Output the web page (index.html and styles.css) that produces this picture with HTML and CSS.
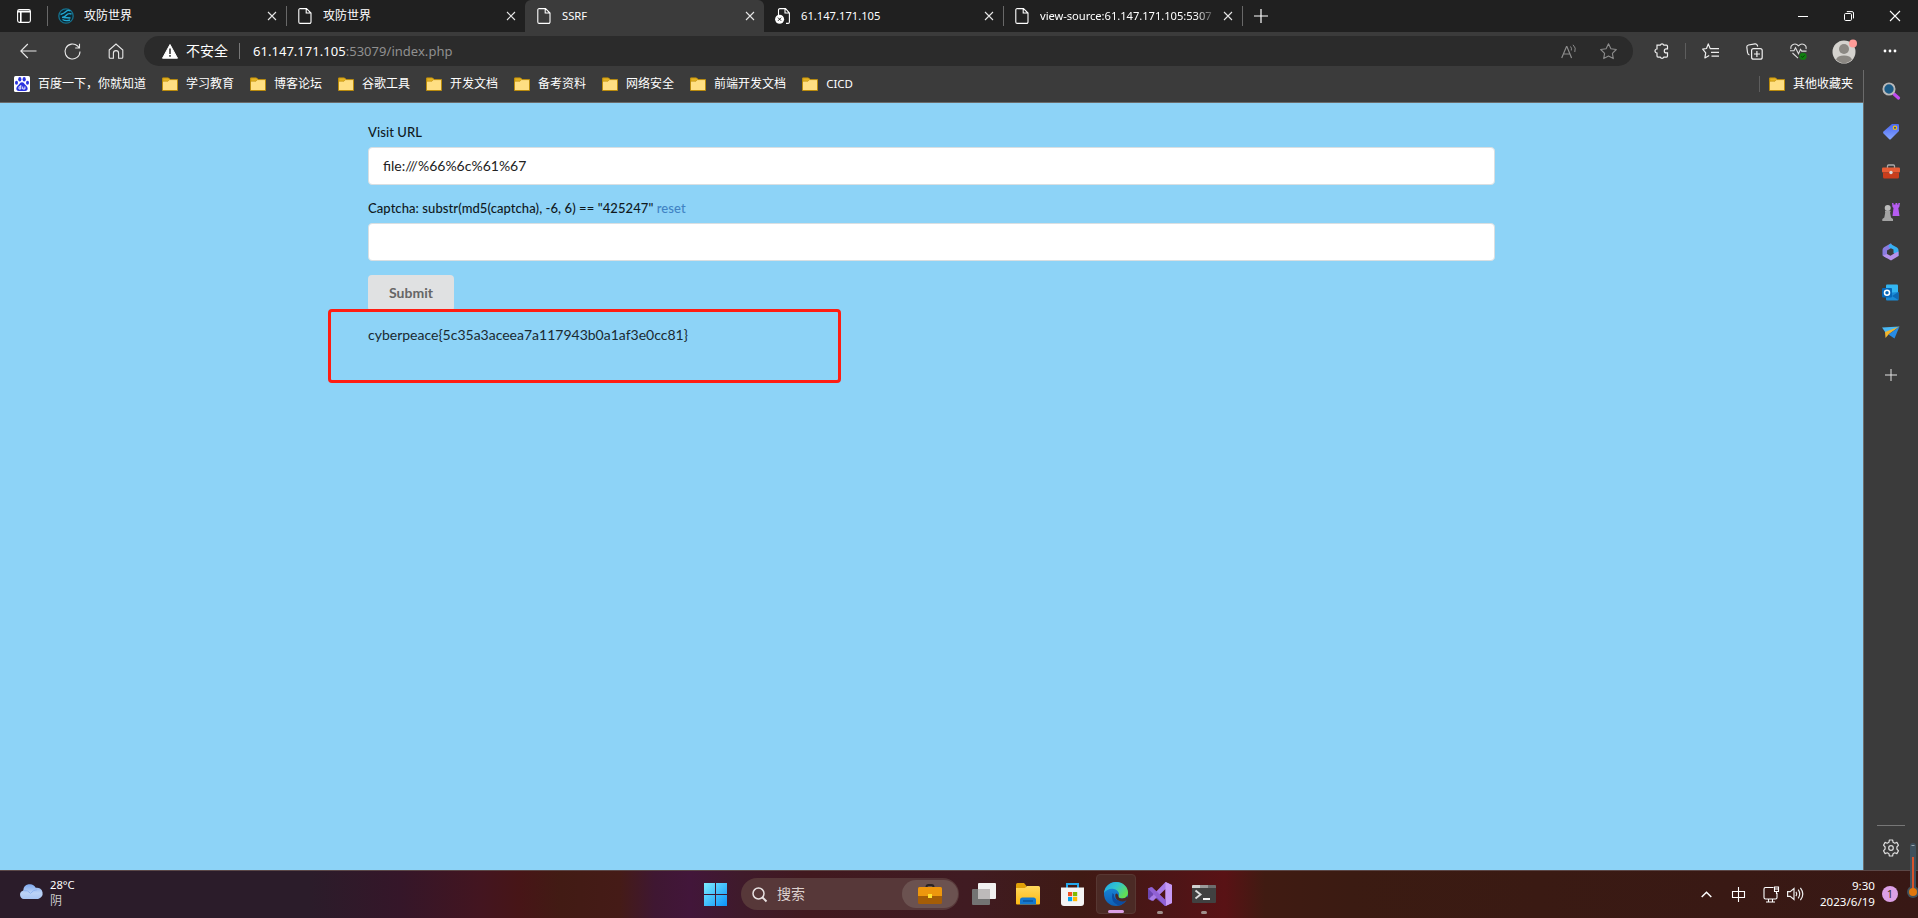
FILE: index.html
```html
<!DOCTYPE html>
<html lang="zh-CN">
<head>
<meta charset="utf-8">
<title>SSRF</title>
<link rel="stylesheet" href="styles.css">
</head>
<body>
<svg width="0" height="0" class="defs">
  <defs>
    <symbol id="page" viewBox="0 0 14 16"><path d="M2.5.6h6L13 5v9a1.4 1.4 0 0 1-1.4 1.4H2.2A1.4 1.4 0 0 1 .8 14V2A1.4 1.4 0 0 1 2.5.6zM8.2.8V5H13" fill="none" stroke="#fff" stroke-width="1.1"/></symbol>
    <symbol id="x" viewBox="0 0 10 10"><path d="M1 1l8 8M9 1L1 9" stroke="#e6e6e6" stroke-width="1.1" fill="none"/></symbol>
    <symbol id="folder" viewBox="0 0 16 14"><path d="M.5 1h6l1.6 1.6h7.4v10.9H.5z" fill="#ffdf83" stroke="#b98a0c"/><path d="M.8 1h5.6l1.3 1.5L6 4.2H.8z" fill="#e5b322" stroke="#b98a0c" stroke-width=".6"/></symbol>
    <linearGradient id="win" x1="0" y1="0" x2="1" y2="1"><stop offset="0" stop-color="#7cecff"/><stop offset="1" stop-color="#0a92fa"/></linearGradient>
    <linearGradient id="cloud" x1="0" y1="0" x2="0" y2="1"><stop offset="0" stop-color="#7fa9ee"/><stop offset=".6" stop-color="#bcd3f6"/><stop offset="1" stop-color="#a9c5f3"/></linearGradient>
    <linearGradient id="edgeTop" x1="0" y1="0" x2="1" y2=".6"><stop offset="0" stop-color="#1fa5e6"/><stop offset=".5" stop-color="#31c5cf"/><stop offset="1" stop-color="#64e04f"/></linearGradient>
    <linearGradient id="edgeLow" x1="0" y1="0" x2="0" y2="1"><stop offset="0" stop-color="#1b8fe0"/><stop offset="1" stop-color="#0d5fb4"/></linearGradient>
    <linearGradient id="gold" x1="0" y1="0" x2="0" y2="1"><stop offset="0" stop-color="#ffd95e"/><stop offset="1" stop-color="#fdb913"/></linearGradient>
    <linearGradient id="tag" x1="0" y1="0" x2="0" y2="1"><stop offset="0" stop-color="#4a67f0"/><stop offset="1" stop-color="#86a6ff"/></linearGradient>
  </defs>
</svg>
<div class="window">
  <header class="tabs">
    <div class="tab-menu"><svg width="14" height="14" viewBox="0 0 14 14"><rect x=".6" y=".6" width="12.8" height="12.8" rx="1.8" fill="none" stroke="#fff" stroke-width="1.1"/><path d="M.6 2.6h12.8M3.8 3v10" stroke="#fff" stroke-width="1.6"/></svg></div>
    <div class="tab site sep">
      <svg width="16" height="16" viewBox="0 0 16 16"><circle cx="8" cy="8" r="7.200" fill="#0c2630" stroke="#16708c" stroke-width="1.300"/><path d="M2.500 6.500Q6 5.500 8 3.500t4.500-.5M4 9.500q3-.5 4.500-2.500t5-1M5.500 9.500l7 .5M4.500 11.500q3.500 2 7.500.5" fill="none" stroke="#22a9d3" stroke-width="1.400"/></svg>
      <span class="title">攻防世界</span><svg class="close" width="10" height="10"><use href="#x"/></svg>
    </div>
    <div class="tab sep"><svg width="14" height="16"><use href="#page"/></svg><span class="title">攻防世界</span><svg class="close" width="10" height="10"><use href="#x"/></svg></div>
    <div class="tab active"><svg width="14" height="16"><use href="#page"/></svg><span class="title latin">SSRF</span><svg class="close" width="10" height="10"><use href="#x"/></svg></div>
    <div class="tab crashed"><svg width="16" height="16" viewBox="0 0 16 16"><path d="M3.500 7V2A1.400 1.400 0 0 1 5 .6h5.500L14.400 5v9a1.400 1.400 0 0 1-1.400 1.400h-2M10 .8V5h4.200" fill="none" stroke="#fff" stroke-width="1.100"/><circle cx="4.600" cy="11.200" r="4.500" fill="#fff"/><path d="M3 9.600l3.200 3.200m0-3.200L3 12.800" stroke="#222" stroke-width="1"/></svg><span class="title latin">61.147.171.105</span><svg class="close" width="10" height="10"><use href="#x"/></svg></div>
    <div class="tab sep"><svg width="14" height="16"><use href="#page"/></svg><span class="title latin fade">view-source:61.147.171.105:5307</span><svg class="close" width="10" height="10"><use href="#x"/></svg></div>
    <div class="new-tab sep"><svg width="14" height="14" viewBox="0 0 14 14"><path d="M7 0v14M0 7h14" stroke="#fff" stroke-width="1.200"/></svg></div>
    <div class="window-buttons">
      <span><svg width="10" height="10"><path d="M0 5.500h10" stroke="#fff"/></svg></span>
      <span><svg width="10" height="10" viewBox="0 0 10 10"><rect x=".5" y="2.500" width="7" height="7" rx="1.200" fill="none" stroke="#fff"/><path d="M2.800.6H8A1.500 1.500 0 0 1 9.500 2v5.400" fill="none" stroke="#fff"/></svg></span>
      <span><svg width="10" height="10"><path d="M0 0l10 10M10 0L0 10" stroke="#fff" stroke-width="1.100"/></svg></span>
    </div>
  </header>

  <nav class="toolbar">
    <span class="cell"><svg width="17" height="16" viewBox="0 0 17 16"><path d="M16.500 8H.8M7.800 1L.8 8l7 7" fill="none" stroke="#e8e8e8" stroke-width="1.100"/></svg></span>
    <span class="cell"><svg width="17" height="17" viewBox="0 0 17 17"><path d="M16 8.500A7.500 7.500 0 1 1 13.600 3L15.300 5M15.500.8V5h-4.300" fill="none" stroke="#e8e8e8" stroke-width="1.100"/></svg></span>
    <span class="cell"><svg width="16" height="16" viewBox="0 0 16 16"><path d="M1.200 7L8 1l6.800 6v7.200q0 1-1 1h-3.200V10.200a2.600 2.600 0 0 0-5.200 0v5H2.200q-1 0-1-1z" fill="none" stroke="#e8e8e8" stroke-width="1.100"/></svg></span>
    <div class="address">
      <svg width="16" height="15" viewBox="0 0 16 15"><path d="M8 .5L15.500 14.200H.5z" fill="#fff" stroke="#fff" stroke-linejoin="round"/><path d="M8 4.500v5.500M8 11v1.700" stroke="#2b2b2b" stroke-width="1.500"/></svg>
      <span class="insecure">不安全</span>
      <span class="url"><b>61.147.171.105</b>:53079/index.php</span>
      <svg class="aloud" width="16" height="15" viewBox="0 0 16 15"><path d="M.7 14L5.500 2.500h.4L10.600 14M2.300 10H9" fill="none" stroke="#8c8c8c" stroke-width="1.200"/><path d="M9.500 2.500q1.500 1.500.8 4M12 .8q3.500 3 1.800 7.200" fill="none" stroke="#8c8c8c"/></svg>
      <svg width="17" height="16" viewBox="0 0 17 16"><path d="M8.500.8l2.400 4.900 5.400.8-3.900 3.800.9 5.300-4.800-2.500-4.800 2.500.9-5.300L.7 6.500l5.400-.8z" fill="none" stroke="#8c8c8c" stroke-width="1.100" stroke-linejoin="round"/></svg>
    </div>
    <span class="cell ext"><svg width="16" height="16" viewBox="0 0 16 16"><path d="M3 2.200h3.200a2 2 0 0 1 3.700 0h2.600q1 0 1 1v2.700h-1.200a2 2 0 0 0 0 4h1.200v3.200q0 1-1 1H9.900a2 2 0 0 1-3.700 0H4q-1 0-1-1V10a2 2 0 0 1 0-4z" fill="none" stroke="#eee" stroke-width="1.200"/></svg></span>
    <span class="bar-sep"></span>
    <span class="cell"><svg width="17" height="16" viewBox="0 0 17 16"><path d="M10.500 5.600L8.200 5.600 6.300.9 4.500 5.500.7 6.200l3 3.700-.8 5L7.200 12.500M10.500 5.600H17M9 9.400h8M9.500 13.200H17" fill="none" stroke="#eee" stroke-width="1.200" stroke-linejoin="round"/></svg></span>
    <span class="cell"><svg width="17" height="17" viewBox="0 0 17 17"><rect x="5.600" y="5.600" width="10.600" height="10.600" rx="2" fill="none" stroke="#eee" stroke-width="1.200"/><path d="M10.900 8v6M8 11h6M3.500 12Q1.800 11.500 1.500 9.500L.8 4Q.7 2.500 2.500 2L9 .8q1.500-.2 2.200 1.200L11.700 3.500" fill="none" stroke="#eee" stroke-width="1.200"/></svg></span>
    <span class="cell"><svg width="17" height="17" viewBox="0 0 17 17"><path d="M1 6C0 2 5-1 8.500 2.800 12-1 17 2 16 6M0 7.800h4l1.500-3 3 6 2-4.500 1.200 1.800h4.800M2.500 10L8 15.200" fill="none" stroke="#ddd" stroke-width="1.100"/><circle cx="13" cy="13.300" r="3.600" fill="#107c10"/><path d="M11.300 13.400l1.200 1 2-2" fill="none" stroke="#053d05"/></svg></span>
    <span class="cell avatar"><svg width="26" height="25" viewBox="0 0 26 25"><circle cx="12" cy="13" r="11.500" fill="#d4d2ce"/><circle cx="12" cy="10" r="5" fill="#8b8883"/><path d="M4 20.500q1.500-4 8-4t8 4q-8 7.500-16 0z" fill="#8b8883"/><circle cx="21" cy="4.500" r="4" fill="#ff9c98"/></svg></span>
    <span class="cell dots"><svg width="14" height="4"><circle cx="2" cy="2" r="1.400" fill="#fff"/><circle cx="7" cy="2" r="1.400" fill="#fff"/><circle cx="12" cy="2" r="1.400" fill="#fff"/></svg></span>
  </nav>

  <div class="body">
    <div class="content">
      <div class="bookmarks">
        <span class="mark"><svg width="16" height="16" viewBox="0 0 16 16"><rect width="16" height="16" rx="1.500" fill="#fff"/><g fill="#2a32df"><ellipse cx="5.800" cy="3.300" rx="1.600" ry="2.200"/><ellipse cx="10.200" cy="3.300" rx="1.600" ry="2.200"/><ellipse cx="2.500" cy="6.800" rx="1.500" ry="2"/><ellipse cx="13.500" cy="6.800" rx="1.500" ry="2"/><path d="M8 6.300c2 0 2.500 2 4 3.300 3 2.800 1.500 5.600-1 5.400H5c-2.500.2-4-2.600-1-5.400C5.500 8.300 6 6.300 8 6.300z"/></g><path d="M6.800 9v4M6.800 10.800H5v2.200h1.800M8.700 10.500V13h2.200v-2.500" stroke="#fff" fill="none" stroke-width=".9"/></svg>百度一下，你就知道</span>
        <span class="mark"><svg width="16" height="14"><use href="#folder"/></svg>学习教育</span>
        <span class="mark"><svg width="16" height="14"><use href="#folder"/></svg>博客论坛</span>
        <span class="mark"><svg width="16" height="14"><use href="#folder"/></svg>谷歌工具</span>
        <span class="mark"><svg width="16" height="14"><use href="#folder"/></svg>开发文档</span>
        <span class="mark"><svg width="16" height="14"><use href="#folder"/></svg>备考资料</span>
        <span class="mark"><svg width="16" height="14"><use href="#folder"/></svg>网络安全</span>
        <span class="mark"><svg width="16" height="14"><use href="#folder"/></svg>前端开发文档</span>
        <span class="mark cicd"><svg width="16" height="14"><use href="#folder"/></svg>CICD</span>
        <span class="mark other"><svg width="16" height="14"><use href="#folder"/></svg>其他收藏夹</span>
      </div>
      <main class="page">
        <form class="form">
          <label>Visit URL</label>
          <div class="input">file:///%66%6c%61%67</div>
          <label>Captcha: substr(md5(captcha), -6, 6) == "425247" <a>reset</a></label>
          <div class="input"></div>
          <div class="submit">Submit</div>
          <p class="flag">cyberpeace{5c35a3aceea7a117943b0a1af3e0cc81}</p>
        </form>
        <div class="marker"></div>
      </main>
    </div>
    <aside class="sidebar">
      <span><svg width="18" height="18" viewBox="0 0 18 18"><path d="M12 12l4.500 4" stroke="#c04bf0" stroke-width="3.200" stroke-linecap="round"/><circle cx="7" cy="7" r="5.600" fill="#1c5b86" stroke="#b9b9b9" stroke-width="1.900"/></svg></span>
      <span><svg width="18" height="17" viewBox="0 0 18 17"><path d="M10 1h6q1 0 1 1v6L9 16q-1 1-2 0L1.500 10.500q-1-1 0-2z" fill="url(#tag)"/><circle cx="13" cy="4.800" r="1.700" fill="#3449a0" stroke="#eec21a" stroke-width="1.200"/></svg></span>
      <span><svg width="18" height="15" viewBox="0 0 18 15"><path d="M5.500 4V2q0-1 1-1h5q1 0 1 1v2" fill="none" stroke="#aaa" stroke-width="1.300"/><rect y="3.500" width="18" height="5" rx="1" fill="#e85c35"/><path d="M1 8.500h16V13q0 1.500-1.500 1.500h-13Q1 14.500 1 13z" fill="#c93d1c"/><circle cx="9" cy="8.500" r="1.700" fill="#ddd"/></svg></span>
      <span><svg width="18" height="18" viewBox="0 0 18 18"><path d="M10 0h1.500v1.500h2V0h1.800v1.500h1V0H18l-.7 4-1 1 1.200 8h-7l1-8-1-1z" fill="#b65cf2"/><circle cx="5.700" cy="5" r="3" fill="#bcbcbc"/><path d="M3 7.800h5.500v1.500H8l1 5.200 2 1.500v2H.3v-2l2-1.500 1-5.200H3z" fill="#a3a3a3"/></svg></span>
      <span><svg width="17" height="18" viewBox="0 0 17 18"><path d="M9 .3L2 4.300Q.5 5.200.5 7v5.500l4.500 2.700V7.500L11 4z" fill="#8a7be0"/><path d="M8 .8l7 3.700q1.500 1 1.500 2.500v6L11.500 10V6.500L6.500 4z" fill="#36b0f3"/><path d="M16.500 8.500V13L9 17.500.8 12.700 5 11l3.500 1.700 4-2.500z" fill="#b592ec"/></svg></span>
      <span><svg width="17" height="17" viewBox="0 0 17 17"><rect x="4" y=".5" width="12" height="12" rx="1" fill="#33b6f2"/><path d="M4 9l12.500-1v7.500q0 1-1 1H5q-1 0-1-1z" fill="#198bd8"/><path d="M10 12l6.500-4v8z" fill="#0c68b5"/><rect y="4" width="10" height="9.500" rx="1" fill="#0767b8"/><circle cx="5" cy="8.700" r="2.500" fill="none" stroke="#fff" stroke-width="1.500"/></svg></span>
      <span><svg width="18" height="13" viewBox="0 0 18 13"><path d="M0 1.500L17.500.5 4.500 8z" fill="#49b9f5"/><path d="M17.500.5L3 6l.5 6L7 8z" fill="#f1b52e"/><path d="M17.500.5L6.500 8.500l6 4z" fill="#278ce6"/></svg></span>
      <span class="add"><svg width="12" height="12"><path d="M6 0v12M0 6h12" stroke="#e4e4e4"/></svg></span>
      <div class="settings"><svg width="18" height="18" viewBox="0 0 18 18"><path d="M7.400 1h3.200l.5 2.300 1.600.9 2.200-.8 1.600 2.800L14.900 8v2l1.600 1.800-1.600 2.800-2.200-.8-1.600.9-.5 2.300H7.400l-.5-2.300-1.600-.9-2.200.8-1.600-2.800L3.100 10V8L1.500 6.200l1.600-2.800 2.200.8 1.600-.9z" fill="none" stroke="#ddd" stroke-width="1.200" stroke-linejoin="round"/><circle cx="9" cy="9" r="2.300" fill="none" stroke="#ddd" stroke-width="1.200"/></svg></div>
    </aside>
  </div>

  <footer class="taskbar">
    <div class="weather">
      <svg width="24" height="16" viewBox="0 0 25 17"><path d="M5 16a4.700 4.700 0 0 1-.7-9.200A7 7 0 0 1 17.500 4 6 6 0 0 1 20 16z" fill="url(#cloud)"/><path d="M5 7q4-1 7 3 3-4 7-4" stroke="#8eb2ef" fill="none"/></svg>
      <div class="weather-text"><span class="latin">28°C</span><span class="sky">阴</span></div>
    </div>
    <div class="apps">
      <svg class="start" width="23" height="23" viewBox="0 0 23 23"><path d="M0 0h11v11H0zM12 0h11v11H12zM0 12h11v11H0zM12 12h11v11H12z" fill="url(#win)"/></svg>
      <div class="search"><svg width="15" height="15" viewBox="0 0 15 15"><circle cx="6.500" cy="6.500" r="5.500" fill="none" stroke="#e9e2e2" stroke-width="1.500"/><path d="M10.500 10.500l4 4" stroke="#e9e2e2" stroke-width="1.900"/></svg><span>搜索</span>
        <div class="case"><svg width="24" height="19" viewBox="0 0 24 19"><path d="M8.500 2q0-2 2-2h3q2 0 2 2" stroke="#292323" stroke-width="2" fill="none"/><rect y="2" width="24" height="17" rx="1.500" fill="#a55d06"/><path d="M0 11V3.500Q0 2 1.500 2h21Q24 2 24 3.500V11z" fill="#ee970d"/><rect x="10" y="9" width="4" height="4" fill="#ffe02e"/></svg></div>
      </div>
      <span class="app"><svg width="24" height="22" viewBox="0 0 24 22"><rect x="6" width="18" height="16" rx="1" fill="#f1f1f1"/><rect y="6" width="18" height="16" rx="1" fill="#737373"/><path d="M6 6h12v10H6z" fill="#bdbaba"/></svg></span>
      <span class="app"><svg width="24" height="22" viewBox="0 0 24 22"><path d="M0 1.500Q0 0 1.500 0H8l2.500 3v4H0z" fill="#e0a007"/><path d="M0 5h9l2-2h11.500Q24 3 24 4.500v16q0 1-1 1H1q-1 0-1-1z" fill="url(#gold)"/><path d="M4 21.500V17q0-2.500 2.500-2.500h11q2.500 0 2.500 2.500v4.500z" fill="#1479cf"/><path d="M7 18h10" stroke="#0a559c" stroke-width="1.500"/></svg></span>
      <span class="app"><svg width="23" height="23" viewBox="0 0 23 23"><path d="M6 5V1h11v4" fill="none" stroke="#22a8ec" stroke-width="2"/><path d="M0 4.500h23V20q0 3-3 3H3q-3 0-3-3z" fill="#f4f4f4"/><path d="M7 9h4.200v4.200H7z" fill="#f25022"/><path d="M12 9h4.200v4.200H12z" fill="#7fba00"/><path d="M7 14h4.200v4.200H7z" fill="#00a4ef"/><path d="M12 14h4.200v4.200H12z" fill="#ffb900"/></svg></span>
      <span class="app current"><svg width="24" height="24" viewBox="0 0 24 24"><circle cx="12" cy="12" r="12" fill="url(#edgeLow)"/><path d="M0 11C1 4 6 0 12 0c7 0 12 5 12 10.500 0 4-3 6-6 6-2.500 0-4-1-3.500-2.200C16 12 14.500 8 10 7 6 6 2 8 0 11z" fill="url(#edgeTop)"/><path d="M8.500 11q-2.500 9 6 12.500 5-1 8-5.500-4 2-8 .5c-3.500-1.200-5-3.500-4.500-6z" fill="#0b4ca0"/><path d="M14.500 14.300c-.5 1.200 1 2.200 3.500 2.200 2 0 4-.8 5-2.200l1 2-1.300 2q-5 2.500-9.200-.3-3-2.500-2-6 2-1.500 3 2.300z" fill="#4b2a25"/></svg></span>
      <span class="app running"><svg width="24" height="24" viewBox="0 0 24 24"><path d="M0 6.500l3-1.500 15 14v4.500L17 24 4 13v6L0 17z" fill="#6b45b0"/><path d="M17.500 0L24 3v18l-6.500 3V7L5 19l-4-2z" fill="#a87be6"/><path d="M17.500 0L24 3v18l-6.500 3z" fill="#c79af6"/><path d="M0 6.500L4 5l14 13.500V24h-1z" fill="#9061d4"/></svg></span>
      <span class="app running"><svg width="24" height="18" viewBox="0 0 24 18"><rect width="24" height="18" rx="1" fill="#414141"/><path d="M0 1q0-1 1-1h7v3H0z" fill="#d0d0d0"/><path d="M8 0h8v3H8z" fill="#9a9a9a"/><path d="M16 0h7q1 0 1 1v2h-8z" fill="#6d6d6d"/><path d="M3.500 5.500l5 4-5 4" stroke="#ddd" fill="none" stroke-width="1.900"/><path d="M11 14h7" stroke="#fff" stroke-width="1.900"/></svg></span>
    </div>
    <div class="tray">
      <svg class="chev" width="11" height="7"><path d="M.7 6l4.800-4.800L10.300 6" stroke="#fff" stroke-width="1.500" fill="none"/></svg>
      <svg class="ime" width="13" height="15"><path d="M.5 4.500h12v6H.5zM6.500 0v15" stroke="#fff" stroke-width="1.100" fill="none"/></svg>
      <svg class="net" width="17" height="17"><path d="M10.500 1.500h-8q-1.500 0-1.500 1.500v8.500q0 1.500 1.500 1.500h10q1.500 0 1.500-1.500V7M5.500 13v2.500M9.500 13v2.500M3 16h9M11.500 1h4v4.500h-4zM13.500 5.500V8M11.500 3h4" stroke="#fff" stroke-width="1.100" fill="none"/></svg>
      <svg class="vol" width="17" height="14" viewBox="0 0 17 14"><path d="M.6 4.700h2.600L7 1.500v11L3.200 9.300H.6zM9 4.800q1.500 2.200 0 4.400M11.200 2.700q3 4.300 0 8.600M13.400.8q4.800 6.200 0 12.400" stroke="#eee" stroke-width="1.200" fill="none"/></svg>
      <div class="clock"><span>9:30</span><span>2023/6/19</span></div>
      <span class="badge latin">1</span>
    </div>
  </footer>
</div>
<svg class="thermo" width="10" height="56" viewBox="0 0 10 56"><rect x="2" y="0" width="6" height="50" rx="3" fill="#3f505c"/><circle cx="5" cy="49" r="6" fill="#3f505c"/><path d="M5 14v32" stroke="#d9532c" stroke-width="2"/><circle cx="5" cy="49" r="4" fill="#e0760c"/><path d="M3.500 2.500h3" stroke="#9aa5ad"/></svg>
</body>
</html>
```

FILE: styles.css
```css
* { box-sizing: border-box; }
body { margin: 0; overflow: hidden; font: 12px "Noto Sans", "Noto Sans CJK SC", sans-serif; color: #fff; }
svg { display: block; flex: none; overflow: visible; }
.defs { position: absolute; }
.window { width: 1918px; height: 918px; display: flex; flex-direction: column; background: #3b3b3b; }
.latin { font-family: "Noto Sans", sans-serif; font-size: 11.2px; }

.tabs { height: 32px; flex: none; display: flex; background: #202020; }
.tab-menu { width: 47px; display: flex; align-items: center; padding-left: 17px; }
.tab { width: 239px; display: flex; align-items: center; padding: 0 9px 0 12px; position: relative; }
.sep::before { content: ""; position: absolute; left: 0; top: 6px; width: 1px; height: 20px; background: #686868; }
.tab .title { flex: 1; margin: 0 6px 1px 11px; line-height: 16px; white-space: nowrap; overflow: hidden; }
.tab.active { background: #3b3b3b; border-radius: 6px 6px 0 0; }
.tab.site, .tab.crashed { padding-left: 11px; }
.tab.site .title, .tab.crashed .title { margin-left: 10px; }
.title.fade { letter-spacing: -.05px; -webkit-mask-image: linear-gradient(90deg, #000 88%, transparent); mask-image: linear-gradient(90deg, #000 88%, transparent); }
.new-tab { position: relative; width: 37px; display: flex; align-items: center; justify-content: center; }
.window-buttons { margin-left: auto; display: flex; }
.window-buttons span { width: 46px; display: flex; align-items: center; justify-content: center; }

.toolbar { height: 38px; flex: none; display: flex; align-items: center; padding-left: 6px; }
.cell { width: 44px; display: flex; justify-content: center; }
.address { width: 1489px; height: 30px; margin: 0 6px; border-radius: 15px; background: #2b2b2b; display: flex; align-items: center; padding: 0 16px 0 18px; }
.insecure { font-size: 14px; margin: 0 11px 0 8px; line-height: 20px; }
.url { border-left: 1px solid #777; padding-left: 13px; font-size: 13px; letter-spacing: .03px; line-height: 16px; color: #909090; }
.url b { font-weight: 400; color: #fff; }
.aloud { margin-left: auto; margin-right: 23px; }
.ext { padding-left: 2px; }
.bar-sep { width: 1px; height: 16px; background: #5d5d5d; margin-left: 2px; margin-right: 2px; }
.avatar { width: 48px; padding-left: 2px; }

.body { height: 800px; flex: none; display: flex; }
.content { width: 1863px; display: flex; flex-direction: column; }
.bookmarks { height: 33px; flex: none; display: flex; align-items: center; gap: 16px; padding: 0 10px 4px 14px; border-bottom: 1px solid #6b6b6b; }
.mark { display: flex; align-items: center; gap: 8px; line-height: 16px; white-space: nowrap; }
.mark.cicd { font-size: 11.5px; }
.mark.other { margin-left: auto; border-left: 1px solid #5d5d5d; padding-left: 9px; }
.page { flex: 1; background: #8dd3f7; position: relative; }
.form { width: 1127px; margin-left: 368px; padding-top: 20px; font-family: Lato, sans-serif; font-size: 14px; color: #1a2a31; display: flex; flex-direction: column; }
.form label { font-size: 13px; font-weight: 500; letter-spacing: .08px; line-height: 18px; margin-bottom: 6px; color: #10191d; }
.form label a { color: #4183c4; }
.input { height: 38px; line-height: 36px; background: #fff; border: 1px solid #d9dfe2; border-radius: 4px; padding: 0 14px; margin-bottom: 14px; color: #222; }
.submit { width: 86px; height: 36px; border-radius: 4px; background: #e0e1e2; color: #666; font-weight: 700; line-height: 36px; text-align: center; }
.flag { margin: 14px 0 0; line-height: 20px; }
.marker { position: absolute; left: 328px; top: 206px; width: 513px; height: 74px; border: 3px solid #ff1d12; border-radius: 4px; }
.sidebar { width: 55px; border-left: 1px solid #6b6b6b; display: flex; flex-direction: column; align-items: center; padding: 1px 1px 0 0; }
.sidebar span { height: 40.2px; flex: none; display: flex; align-items: center; }
.sidebar .add { margin-top: 3px; }
.settings { margin-top: auto; width: 28px; height: 45px; border-top: 1px solid #777; display: flex; justify-content: center; padding-top: 13px; }

.taskbar { height: 48px; flex: none; display: flex; border-top: 1px solid #5b4848; background: linear-gradient(90deg, #2b1c2a 0, #2b1c2a 310px, #351629 400px, #431520 480px, #471517 520px, #421b14 560px, #451b17 620px, #3f1732 655px, #42163a 690px, #3f1a2b 740px, #41191f 807px, #401b22 966px, #3f1a14 1080px, #4d1517 1170px, #591215 1225px, #401b12 1265px, #3b1b12 1350px, #381815 1918px); }
.weather { width: 704px; display: flex; padding: 13px 0 0 19px; gap: 7px; }
.weather-text { display: flex; flex-direction: column; margin-top: -7px; line-height: 16px; }
.sky { color: #ccc; }
.apps { display: flex; align-items: center; padding-bottom: 1px; }
.start { margin-right: 14px; }
.search { width: 218px; height: 32px; border-radius: 16px; background: #573839; display: flex; align-items: center; padding: 0 1px 0 11px; font-size: 14px; color: #ddd1d0; gap: 10px; margin-right: 3px; }
.search span { padding-bottom: 2px; }
.case { margin-left: auto; width: 56px; height: 28px; border-radius: 14px; background: #6b5250; display: flex; align-items: center; justify-content: center; }
.app { width: 40px; height: 40px; margin: 0 2px; border-radius: 4px; position: relative; display: flex; align-items: center; justify-content: center; }
.current { background: #4b2a25; border: 1px solid #573732; }
.current::after, .running::after { content: ""; position: absolute; bottom: 0; width: 16px; height: 3px; border-radius: 2px; background: #dca0e6; }
.running::after { width: 6px; background: #a08f8c; }
.tray { margin-left: auto; display: flex; align-items: center; padding: 0 20px 1px 0; }
.chev { margin-right: 20px; }
.ime { margin-right: 18px; }
.net { margin-right: 7px; }
.vol { margin-right: 15px; }
.clock { display: flex; flex-direction: column; align-items: flex-end; line-height: 16px; width: 56px; margin-right: 7px; font-size: 11.6px; white-space: nowrap; }
.badge { width: 16px; height: 16px; border-radius: 50%; background: #dca0e6; color: #332; line-height: 16px; text-align: center; }
.thermo { position: absolute; left: 1908px; top: 843px; }
```
